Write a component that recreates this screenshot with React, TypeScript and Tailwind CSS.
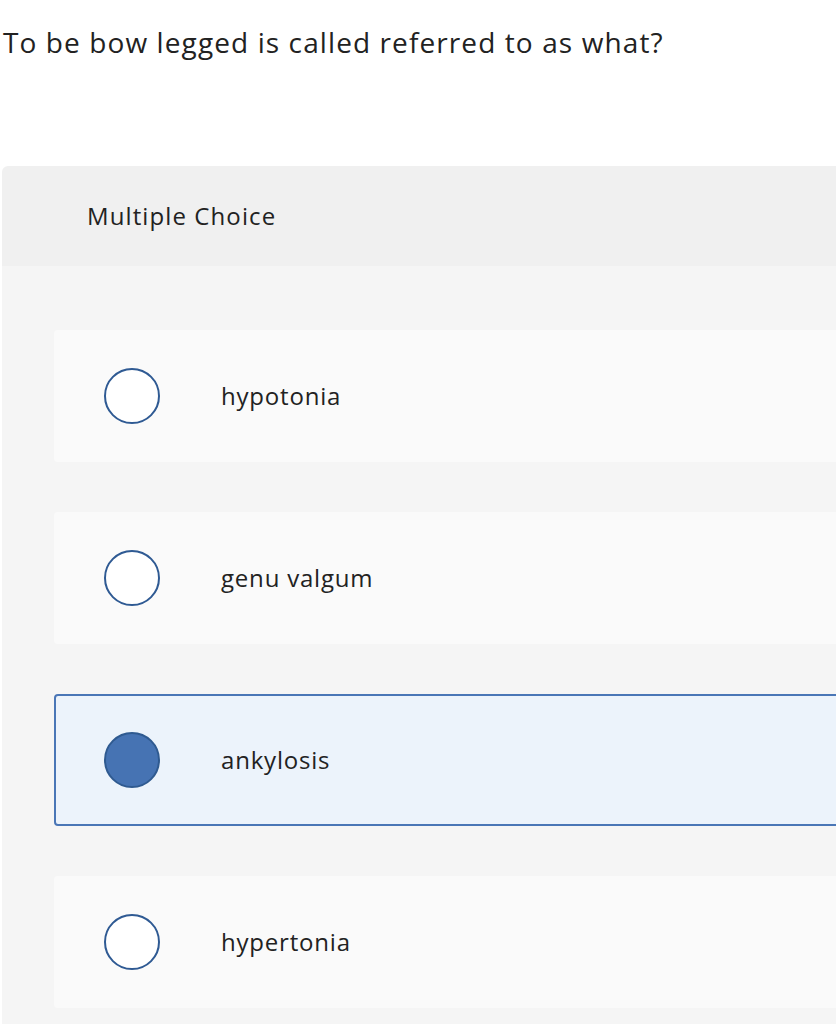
import React from "react";

const options = [
  { id: "a", label: "hypotonia", selected: false },
  { id: "b", label: "genu valgum", selected: false },
  { id: "c", label: "ankylosis", selected: true },
  { id: "d", label: "hypertonia", selected: false },
];

export default function App() {
  return (
    <div
      className="w-[836px] h-[1024px] overflow-hidden bg-white text-[#222]"
      style={{ fontFamily: "'Open Sans', 'Noto Sans', sans-serif" }}
    >
      <h1 className="pl-[3px] pt-[22px] text-[28px] leading-[40px] tracking-[1.1px]">
        To be bow legged is called referred to as what?
      </h1>

      <div className="ml-[2px] mt-[104px] w-[1000px] rounded-tl-[6px] overflow-hidden">
        <div className="h-[100px] bg-[#f0f0f0] flex items-center pl-[85px]">
          <span className="text-[24px] tracking-[1.1px]">Multiple Choice</span>
        </div>

        <div className="bg-[#f5f5f5] pl-[52px] pt-[64px] pb-[40px] flex flex-col gap-[50px]">
          {options.map((o) => (
            <div
              key={o.id}
              className={
                o.selected
                  ? "h-[132px] rounded-[4px] border-2 border-[#4a76b6] bg-[#ecf3fb] flex items-center pl-[48px]"
                  : "h-[132px] rounded-[4px] bg-[#fafafa] flex items-center pl-[50px]"
              }
            >
              {o.selected ? (
                <span className="w-[56px] h-[56px] rounded-full bg-[#4673b3] border-2 border-[#2f5a90] shrink-0" />
              ) : (
                <span className="w-[56px] h-[56px] rounded-full bg-white border-2 border-[#2f5a93] shrink-0" />
              )}
              <span className="ml-[61px] text-[24px] leading-none tracking-[0.8px]">
                {o.label}
              </span>
            </div>
          ))}
        </div>
      </div>
    </div>
  );
}
